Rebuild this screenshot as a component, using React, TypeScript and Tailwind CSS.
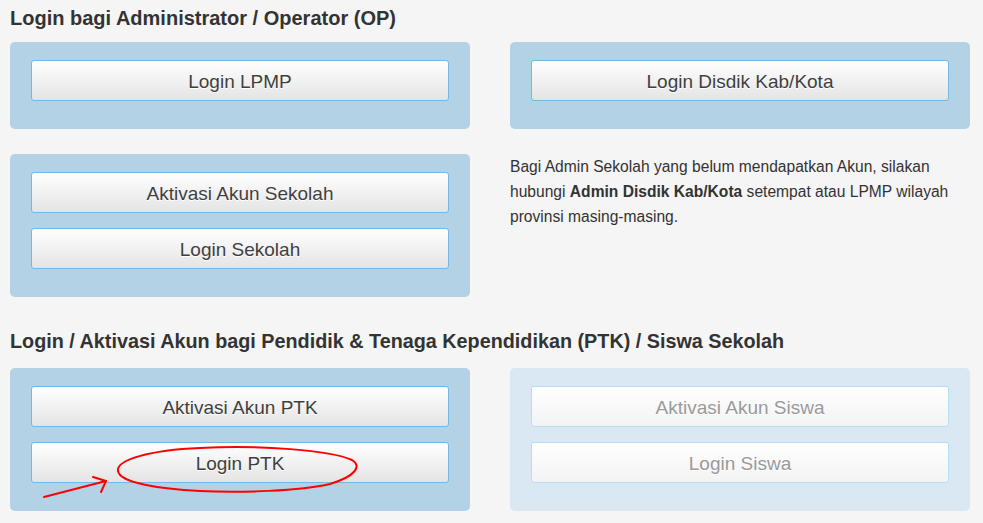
import React from "react";

const font = { fontFamily: '"Liberation Sans", Arial, sans-serif' };

function Btn({ label, disabled = false, last = false }: { label: string; disabled?: boolean; last?: boolean }) {
  return (
    <div
      className={`flex h-[41px] items-center justify-center rounded-[3px] border pt-[3px] text-[19px] ${
        disabled
          ? "border-[#b8dcf1] bg-gradient-to-b from-[#ffffff] to-[#f3f3f3] text-[#9a9a9a]"
          : "border-[#74b9e5] bg-gradient-to-b from-[#ffffff] to-[#e4e4e4] text-[#3f3f3f]"
      } ${last ? "" : "mb-[15px]"}`}
      style={{ textShadow: "0 1px 0 #ffffff" }}
    >
      {label}
    </div>
  );
}

function Panel({ children, disabled = false }: { children: React.ReactNode; disabled?: boolean }) {
  return (
    <div
      className={`rounded-[5px] px-[21px] pt-[18px] pb-[13px] ${
        disabled ? "bg-[#dae8f3]" : "bg-[#b3d2e6]"
      }`}
    >
      {children}
    </div>
  );
}

export default function App() {
  return (
    <div className="relative h-[523px] w-[983px] overflow-hidden bg-[#f5f5f5] pl-[10px] pt-[6px]" style={font}>
      <h2 className="mb-[12px] text-[20px] font-bold leading-[24px] text-[#333333]">
        Login bagi Administrator / Operator (OP)
      </h2>
      <div className="grid w-[960px] grid-cols-2 gap-x-[40px]">
        <Panel>
          <Btn label="Login LPMP" />
        </Panel>
        <Panel>
          <Btn label="Login Disdik Kab/Kota" />
        </Panel>
      </div>
      <div className="mt-[25px] grid w-[960px] grid-cols-2 gap-x-[40px] items-start">
        <Panel>
          <Btn label="Aktivasi Akun Sekolah" />
          <Btn label="Login Sekolah" />
        </Panel>
        <p className="text-[15.6px] leading-[25px] text-[#333333]">
          Bagi Admin Sekolah yang belum mendapatkan Akun, silakan hubungi{" "}
          <b className="font-bold">Admin Disdik Kab/Kota</b> setempat atau LPMP wilayah provinsi masing-masing.
        </p>
      </div>
      <h2 className="mb-[15px] mt-[32px] text-[19.8px] font-bold leading-[24px] text-[#333333]">
        Login / Aktivasi Akun bagi Pendidik &amp; Tenaga Kependidikan (PTK) / Siswa Sekolah
      </h2>
      <div className="grid w-[960px] grid-cols-2 gap-x-[40px]">
        <Panel>
          <Btn label="Aktivasi Akun PTK" />
          <Btn label="Login PTK" />
        </Panel>
        <Panel disabled>
          <Btn label="Aktivasi Akun Siswa" disabled />
          <Btn label="Login Siswa" disabled />
        </Panel>
      </div>
      <svg className="pointer-events-none absolute left-0 top-0" width="983" height="523" viewBox="0 0 983 523">
        <g fill="none" stroke="#ff0000" strokeWidth="2" strokeLinecap="round" strokeLinejoin="round">
          <path d="M 200 448 C 260 445, 330 450, 352 460 C 362 466, 356 476, 330 484 C 300 491, 240 493, 200 491 C 160 489, 120 483, 118 471 C 116 460, 150 450, 200 448 Z" />
          <path d="M 44 497 L 106 481" />
          <path d="M 93 477 L 106 481 L 101 492" />
        </g>
      </svg>
    </div>
  );
}
